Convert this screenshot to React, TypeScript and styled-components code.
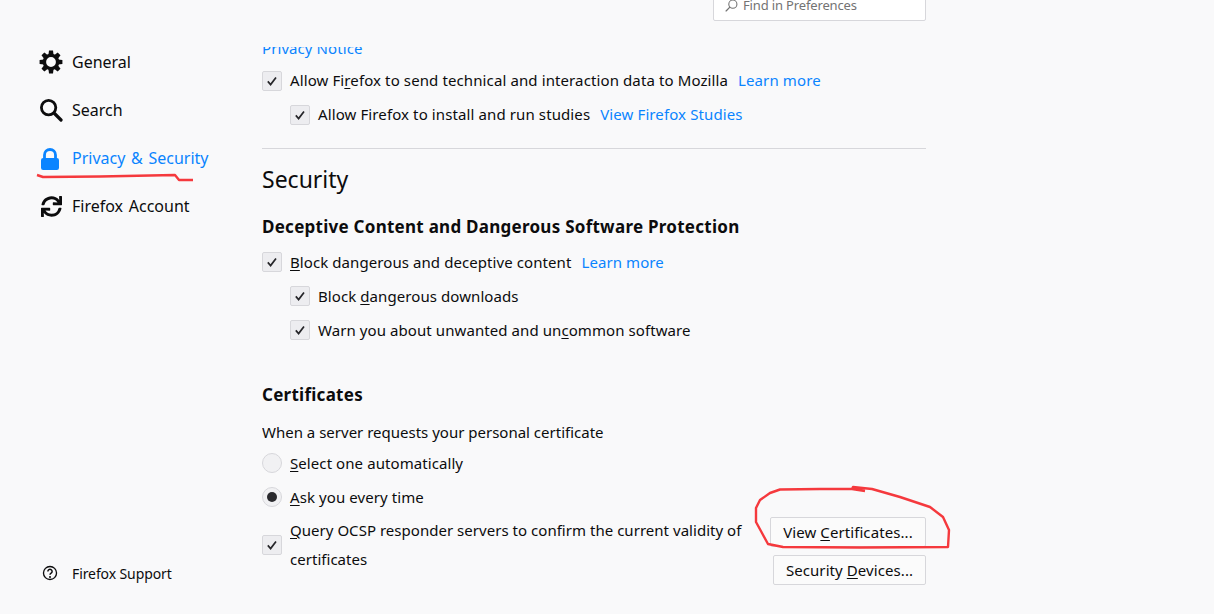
import React, { FC, ReactNode } from "react";
import styled, { createGlobalStyle } from "styled-components";
import { FaSync } from "react-icons/fa";

const App: FC = () => {
  return (
    <>
      <GlobalStyle />
      <Page>
        <Sidebar>
          <Nav>
            <NavItem>
              <IconSlot>
                <GearIcon />
              </IconSlot>
              <NavLabel>General</NavLabel>
            </NavItem>
            <NavItem>
              <IconSlot>
                <SearchIcon />
              </IconSlot>
              <NavLabel>Search</NavLabel>
            </NavItem>
            <NavItem $active>
              <IconSlot>
                <LockIcon />
              </IconSlot>
              <NavLabel>Privacy &amp; Security</NavLabel>
            </NavItem>
            <NavItem>
              <IconSlot>
                <FaSync size={21} />
              </IconSlot>
              <NavLabel>Firefox Account</NavLabel>
            </NavItem>
          </Nav>
          <Support>
            <HelpIcon />
            <span>Firefox Support</span>
          </Support>
        </Sidebar>
        <Main>
          <FindBox>
            <FindIcon />
            <span>Find in Preferences</span>
          </FindBox>
          <Scroller>
            <ClippedLink>Privacy Notice</ClippedLink>
            <TopRow>
              <Check />
              <span>
                Allow Fi<Key>r</Key>efox to send technical and interaction data to Mozilla
              </span>
              <Link>Learn more</Link>
            </TopRow>
            <TopRow $sub>
              <Check />
              <span>Allow Firefox to install and run studies</span>
              <Link>View Firefox Studies</Link>
            </TopRow>
            <Divider />
            <Heading>Security</Heading>
            <SubHeading>Deceptive Content and Dangerous Software Protection</SubHeading>
            <Row>
              <Check />
              <span>
                <Key>B</Key>lock dangerous and deceptive content
              </span>
              <Link>Learn more</Link>
            </Row>
            <Row $sub>
              <Check />
              <span>
                Block <Key>d</Key>angerous downloads
              </span>
            </Row>
            <Row $sub>
              <Check />
              <span>
                Warn you about unwanted and un<Key>c</Key>ommon software
              </span>
            </Row>
            <CertHeading>Certificates</CertHeading>
            <Description>When a server requests your personal certificate</Description>
            <Row>
              <Radio />
              <span>
                <Key>S</Key>elect one automatically
              </span>
            </Row>
            <Row>
              <Radio $selected />
              <span>
                <Key>A</Key>sk you every time
              </span>
            </Row>
            <OcspRow>
              <OcspLabel>
                <Check />
                <OcspText>
                  <Key>Q</Key>uery OCSP responder servers to confirm the current validity of certificates
                </OcspText>
              </OcspLabel>
              <ButtonColumn>
                <Button $wide>
                  View <Key>C</Key>ertificates...
                </Button>
                <Button>
                  Security <Key>D</Key>evices...
                </Button>
              </ButtonColumn>
            </OcspRow>
          </Scroller>
        </Main>
        <Scribble />
      </Page>
    </>
  );
};

export default App;

const Icon: FC<{ size: number; children: ReactNode }> = ({ size, children }) => (
  <svg width={size} height={size} viewBox="0 0 24 24" fill="none">
    {children}
  </svg>
);

const GearIcon = () => (
  <Icon size={24}>
    <circle cx="12" cy="12" r="6.6" stroke="#0c0c0d" strokeWidth="3.4" />
    {[0, 45, 90, 135, 180, 225, 270, 315].map((angle) => (
      <path
        key={angle}
        d="M10 0.6h4l0.6 4.4h-5.2z"
        fill="#0c0c0d"
        transform={`rotate(${angle} 12 12)`}
      />
    ))}
  </Icon>
);

const SearchIcon = () => (
  <Icon size={24}>
    <circle cx="9.6" cy="9.6" r="7.2" stroke="#0c0c0d" strokeWidth="2.8" />
    <path d="M15.5 15.5L22 22" stroke="#0c0c0d" strokeWidth="3.2" strokeLinecap="round" />
  </Icon>
);

const LockIcon = () => (
  <Icon size={24}>
    <path d="M5.5 13V9a5.5 5.5 0 0 1 11 0v4" stroke="#0a84ff" strokeWidth="2.8" />
    <rect x="2" y="12" width="18" height="12" rx="2.2" fill="#0a84ff" />
  </Icon>
);

const HelpIcon = () => (
  <Icon size={16}>
    <circle cx="12" cy="12" r="9.8" stroke="#0c0c0d" strokeWidth="2" />
    <path
      d="M8.8 9.6a3.2 3.2 0 1 1 4.9 2.7c-1.1.7-1.7 1.2-1.7 2.5"
      stroke="#0c0c0d"
      strokeWidth="2.2"
    />
    <circle cx="12" cy="18" r="1.5" fill="#0c0c0d" />
  </Icon>
);

const FindIcon = () => (
  <Icon size={13}>
    <circle cx="14.5" cy="9.5" r="7.5" stroke="#737373" strokeWidth="2" />
    <path d="M9 15L2 22" stroke="#737373" strokeWidth="2.4" strokeLinecap="round" />
  </Icon>
);

const Check = () => (
  <CheckBox>
    <svg width="12" height="12" viewBox="0 0 12 12" fill="none">
      <path d="M1.8 6.4L4.6 9.6L10 2.4" stroke="#26262a" strokeWidth="1.7" />
    </svg>
  </CheckBox>
);

const Scribble = () => (
  <ScribbleLayer width="1214" height="614" viewBox="0 0 1214 614" fill="none">
    <path
      d="M37 175L43 177L100 176.5L175 175L179 180L193 180"
      stroke="#f5393d"
      strokeWidth="2.4"
      strokeLinejoin="round"
    />
    <path
      d="M865 491L852 489L820 489L780 489.5L770 493L760 500L756 508L756 522L762 533L768 544L783 547L860 547.5L948 547L949 530L943 517L930 507L900 497L872 489L853 487L852 489"
      stroke="#f5393d"
      strokeWidth="2.4"
      strokeLinejoin="round"
    />
  </ScribbleLayer>
);

const GlobalStyle = createGlobalStyle`
  html, body {
    margin: 0;
    padding: 0;
    height: 100%;
    overflow: hidden;
    background: #f9f9fa;
  }
  body {
    font-family: "Noto Sans", "Open Sans", sans-serif;
    font-size: 15px;
    letter-spacing: 0.08px;
    color: #0c0c0d;
  }
`;

const Page = styled.div`
  position: relative;
  display: flex;
  width: 1214px;
  height: 614px;
  overflow: hidden;
`;

const Sidebar = styled.aside`
  width: 262px;
  flex-shrink: 0;
  display: flex;
  flex-direction: column;
  justify-content: space-between;
  padding: 38px 0 29px 39px;
  box-sizing: border-box;
`;

const Nav = styled.nav`
  display: flex;
  flex-direction: column;
`;

const NavItem = styled.div<{ $active?: boolean }>`
  display: flex;
  align-items: center;
  height: 48px;
  gap: 9px;
  color: ${(props) => (props.$active ? "#0a84ff" : "#0c0c0d")};
  font-size: 16px;
  letter-spacing: 0;
  word-spacing: 1.5px;
`;

const IconSlot = styled.span`
  width: 24px;
  height: 24px;
  display: flex;
  align-items: center;
  justify-content: center;
`;

const NavLabel = styled.span`
  line-height: 24px;
`;

const Support = styled.div`
  display: flex;
  align-items: center;
  gap: 14px;
  padding-left: 3px;
  font-size: 14px;
  letter-spacing: -0.1px;
  height: 24px;
`;

const Main = styled.main`
  width: 664px;
  display: flex;
  flex-direction: column;
`;

const FindBox = styled.div`
  align-self: flex-end;
  width: 213px;
  height: 32px;
  flex-shrink: 0;
  margin-top: -11px;
  box-sizing: border-box;
  display: flex;
  align-items: center;
  gap: 5px;
  padding-left: 11px;
  background: #fff;
  border: 1px solid #d7d7db;
  border-radius: 2px;
  color: #737373;
  font-size: 13px;
  letter-spacing: -0.15px;
`;

const Scroller = styled.div`
  flex: 1;
  margin-top: 26px;
  overflow: hidden;
`;

const ClippedLink = styled.div`
  margin: -9px 0 6px;
  height: 20px;
  line-height: 20px;
  color: #0a84ff;
`;

const Row = styled.div<{ $sub?: boolean }>`
  display: flex;
  align-items: center;
  height: 34px;
  gap: 8px;
  padding-left: ${(props) => (props.$sub ? "28px" : "0")};
`;

const TopRow = styled(Row)`
  letter-spacing: 0.11px;

  & > :not(:first-child) {
    margin-bottom: 2px;
  }
`;

const CheckBox = styled.span`
  width: 20px;
  height: 20px;
  flex-shrink: 0;
  box-sizing: border-box;
  display: flex;
  align-items: center;
  justify-content: center;
  background: #ededf0;
  border: 1px solid #d7d7db;
  border-radius: 2px;
`;

const Radio = styled.span<{ $selected?: boolean }>`
  width: 20px;
  height: 20px;
  flex-shrink: 0;
  box-sizing: border-box;
  display: flex;
  align-items: center;
  justify-content: center;
  background: #f1f1f3;
  border: 1px solid #d7d7db;
  border-radius: 50%;

  &::after {
    content: "";
    display: ${(props) => (props.$selected ? "block" : "none")};
    width: 10px;
    height: 10px;
    border-radius: 50%;
    background: #2a2a2e;
  }
`;

const Link = styled.a`
  color: #0a84ff;
  margin-left: 2px;
`;

const Key = styled.span`
  text-decoration: underline;
  text-underline-offset: 2px;
`;

const Divider = styled.hr`
  margin: 16px 0 0;
  border: 0;
  border-top: 1px solid #d7d7db;
`;

const Heading = styled.h1`
  margin: 15px 0 0;
  font-size: 23px;
  font-weight: 400;
  line-height: 30px;
  letter-spacing: 0;
`;

const SubHeading = styled.h2`
  margin: 21px 0 6px;
  font-size: 17px;
  font-weight: 700;
  line-height: 24px;
  letter-spacing: 0.26px;
`;

const CertHeading = styled(SubHeading)`
  margin: 36px 0 0;
`;

const Description = styled.div`
  margin: 13px 0 2px;
  height: 24px;
  line-height: 24px;
  letter-spacing: 0;
`;

const OcspRow = styled.div`
  display: flex;
  align-items: flex-start;
  justify-content: space-between;
`;

const OcspLabel = styled.div`
  width: 490px;
  display: flex;
  align-items: center;
  gap: 8px;
  margin-top: 2px;
`;

const OcspText = styled.span`
  line-height: 29px;
  letter-spacing: 0.03px;
`;

const ButtonColumn = styled.div`
  display: flex;
  flex-direction: column;
  align-items: flex-end;
  gap: 8px;
  margin-top: 3px;
`;

const Button = styled.button<{ $wide?: boolean }>`
  height: 30px;
  width: ${(props) => (props.$wide ? "156px" : "153px")};
  padding: 0;
  background: #fbfbfb;
  border: 1px solid #d7d7db;
  border-radius: 2px;
  color: #0c0c0d;
  font-family: inherit;
  font-size: 15px;
  letter-spacing: inherit;
`;

const ScribbleLayer = styled.svg`
  position: absolute;
  top: 0;
  left: 0;
  pointer-events: none;
`;
